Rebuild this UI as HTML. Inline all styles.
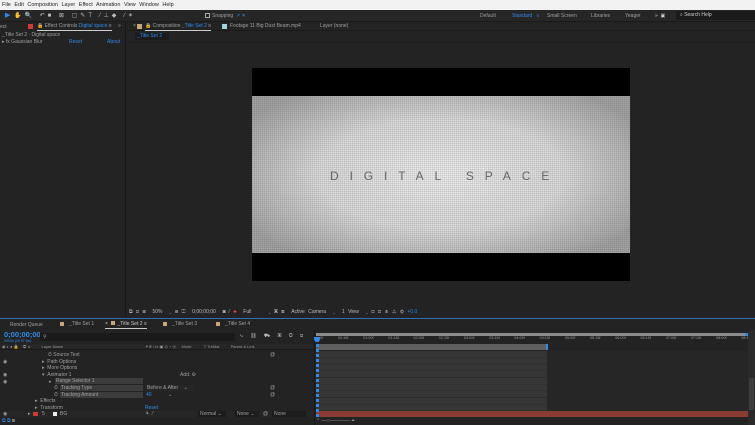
<!DOCTYPE html>
<html><head><meta charset="utf-8"><style>
*{margin:0;padding:0;box-sizing:border-box}
body{width:755px;height:425px;overflow:hidden;background:#232323;font-family:"Liberation Sans",sans-serif;font-size:5px;color:#a0a0a0;position:relative}
.a{position:absolute;white-space:nowrap}
.blue{color:#2d8ceb}
</style></head><body>
<!-- menu -->
<div class="a" style="left:0;top:0;width:755px;height:10px;background:#f2f2f2;color:#222;font-size:5.5px;line-height:10px;padding-left:2px;word-spacing:2px">File Edit Composition Layer Effect Animation View Window Help</div>
<!-- toolbar -->
<div class="a" style="left:0;top:10px;width:755px;height:12px;background:#262626;border-bottom:1px solid #1a1a1a"></div>
<div class="a" style="left:5px;top:13px;color:#2d8ceb;font-size:7px;line-height:6px">▶</div>
<div class="a" style="left:14px;top:12px;color:#bbb;font-size:6px;letter-spacing:3px;line-height:8px">✋🔍 ↶■ ⊠ ▢✎T ⁄⊥◆ ⁄✶</div>
<div class="a" style="left:205px;top:13px;width:5px;height:5px;border:1px solid #aaa"></div>
<div class="a" style="left:212px;top:12px;line-height:8px">Snapping &nbsp;<span class="blue">↗ ✕</span></div>
<div class="a" style="left:480px;top:12px;line-height:8px;color:#999">Default</div>
<div class="a" style="left:512px;top:12px;line-height:8px" ><span class="blue">Standard &nbsp; ≡</span></div>
<div class="a" style="left:547px;top:12px;line-height:8px">Small Screen</div>
<div class="a" style="left:591px;top:12px;line-height:8px">Libraries</div>
<div class="a" style="left:625px;top:12px;line-height:8px">Yeager</div>
<div class="a" style="left:655px;top:12px;line-height:8px;color:#ccc">» &nbsp;▣</div>
<div class="a" style="left:676px;top:11px;width:79px;height:9px;background:#1b1b1b;line-height:9px;padding-left:4px;color:#ccc">⌕ Search Help</div>
<!-- left panel -->
<div class="a" style="left:0;top:22px;width:126px;height:296px;background:#232323;border-right:1px solid #181818"></div>
<div class="a" style="left:0;top:24px;line-height:6px">ect</div>
<div class="a" style="left:28px;top:24px;width:5px;height:5px;background:#d03a32"></div>
<div class="a" style="left:37px;top:23px;line-height:7px;border-bottom:1px solid #ccc">🔒 Effect Controls <span class="blue">Digital space</span> ≡</div>
<div class="a" style="left:118px;top:23px;line-height:7px">»</div>
<div class="a" style="left:2px;top:32px;line-height:6px">_Title Set 2 · Digital space</div>
<div class="a" style="left:2px;top:39px;line-height:6px">▸ fx Gaussian Blur</div>
<div class="a blue" style="left:69px;top:39px;line-height:6px">Reset</div>
<div class="a blue" style="left:107px;top:39px;line-height:6px">About</div>
<!-- comp panel tabs -->
<div class="a" style="left:127px;top:22px;width:628px;height:9px;background:#232323;border-bottom:1px solid #1a1a1a"></div>
<div class="a" style="left:133px;top:23px;line-height:7px">×</div>
<div class="a" style="left:137px;top:24px;width:5px;height:5px;background:#c8a878"></div>
<div class="a" style="left:145px;top:23px;line-height:7px;border-bottom:1px solid #ccc">🔒 Composition <span class="blue">_Title Set 2</span> ≡</div>
<div class="a" style="left:222px;top:24px;width:5px;height:5px;background:#9fd4d8"></div>
<div class="a" style="left:230px;top:23px;line-height:7px">Footage 11 Big Dust Beam.mp4</div>
<div class="a" style="left:320px;top:23px;line-height:7px">Layer (none)</div>
<div class="a blue" style="left:135px;top:33px;width:34px;height:7px;background:#1b1b1b;line-height:7px;padding-left:2px">_Title Set 2</div>
<div class="a" style="left:127px;top:42px;width:628px;height:1px;background:#1d1d1d"></div>
<!-- viewer -->
<div class="a" style="left:252px;top:68px;width:378px;height:213px;background:#000"></div>
<div class="a" style="left:252px;top:96px;width:378px;height:157px;background:radial-gradient(ellipse 60% 65% at 50% 50%,#ececec 0%,#dadada 55%,#a4a4a4 100%)"></div>
<div class="a" style="left:252px;top:96px;width:378px;height:157px;background-image:linear-gradient(90deg,rgba(0,0,0,.07) 1px,transparent 1px),linear-gradient(0deg,rgba(0,0,0,.07) 1px,transparent 1px);background-size:2px 2px"></div>
<div class="a" style="left:330px;top:169px;font-size:12px;line-height:14px;letter-spacing:10.9px;color:#666">DIGITAL SPACE</div>
<!-- viewer bottom bar -->
<div class="a" style="left:127px;top:308px;width:628px;height:10px;background:#232323;overflow:hidden"></div>
<div class="a" style="left:129px;top:309px;line-height:7px;color:#bbb;word-spacing:2px">⧉ ⊡ ⊞ &nbsp;50% &nbsp;⌄ ⊟ ◫ &nbsp;0;00;00;00 &nbsp;◙ ⁄ <span style="color:#d44">♣</span> &nbsp;Full &nbsp;&nbsp;&nbsp;&nbsp;⌄ ▣ ⊠ &nbsp;Active Camera &nbsp;⌄ &nbsp;1 View &nbsp;⌄ ⊡ ⊡ ⏏ ⁂ ⚙ <span class="blue">+0.0</span></div>
<div class="a" style="left:0;top:318px;width:755px;height:1px;background:#2a6fb8"></div>
<!-- timeline tabs -->
<div class="a" style="left:0;top:319px;width:755px;height:11px;background:#232323"></div>
<div class="a" style="left:10px;top:322px;line-height:6px">Render Queue</div>
<div class="a" style="left:60px;top:322px;width:4px;height:4px;background:#c8a878"></div>
<div class="a" style="left:69px;top:321px;line-height:6px">_Title Set 1</div>
<div class="a" style="left:105px;top:321px;line-height:7px;border-bottom:1px solid #ccc;color:#ccc">× &nbsp;<span style="display:inline-block;width:4px;height:4px;background:#c8a878"></span> &nbsp;_Title Set 2 ≡</div>
<div class="a" style="left:163px;top:322px;width:4px;height:4px;background:#c8a878"></div>
<div class="a" style="left:172px;top:321px;line-height:6px">_Title Set 3</div>
<div class="a" style="left:216px;top:322px;width:4px;height:4px;background:#c8a878"></div>
<div class="a" style="left:225px;top:321px;line-height:6px">_Title Set 4</div>
<!-- timeline left -->
<div class="a" style="left:0;top:330px;width:315px;height:95px;background:#232323"></div>
<div class="a blue" style="left:4px;top:331px;font-size:7.5px;line-height:8px;font-weight:bold">0;00;00;00</div>
<div class="a blue" style="left:4px;top:339px;font-size:3.5px;line-height:4px">00000 (29.97 fps)</div>
<div class="a" style="left:40px;top:333px;width:195px;height:8px;background:#1a1a1a;line-height:8px;padding-left:3px">⚲</div>
<div class="a" style="left:240px;top:333px;line-height:7px;color:#bbb;word-spacing:6px">⤷ ⛓ ⛟ ▣ ◎ ⊡</div>
<div class="a" style="left:0;top:344px;width:315px;height:6px;background:#262626;border-bottom:1px solid #1a1a1a"></div>
<div class="a" style="left:2px;top:344px;font-size:4px;line-height:6px;color:#999">◉ ◐ ● 🔒 &nbsp;&nbsp; ⧉ &nbsp;# &nbsp;&nbsp;&nbsp;&nbsp;&nbsp;&nbsp;&nbsp;&nbsp;&nbsp;Layer Name</div>
<div class="a" style="left:145px;top:344px;font-size:4px;line-height:6px;color:#999">⚘✲ \ fx ▣ ◎ ◔ ◎ &nbsp;&nbsp;&nbsp;&nbsp;Mode &nbsp;&nbsp;&nbsp;&nbsp;&nbsp;&nbsp;&nbsp;&nbsp;&nbsp;&nbsp;T TrkMat &nbsp;&nbsp;&nbsp;&nbsp;&nbsp;&nbsp;&nbsp;&nbsp;&nbsp;Parent &amp; Link</div>
<div class="a" style="left:48px;top:352px;line-height:6px">⏱ Source Text</div>
<div class="a" style="left:270px;top:352px;line-height:6px">@</div>
<div class="a" style="left:3px;top:359px;line-height:6px">◉</div>
<div class="a" style="left:42px;top:359px;line-height:6px">▸ &nbsp;Path Options</div>
<div class="a" style="left:42px;top:365px;line-height:6px">▸ &nbsp;More Options</div>
<div class="a" style="left:3px;top:372px;line-height:6px">◉</div>
<div class="a" style="left:42px;top:372px;line-height:6px">▾ &nbsp;Animator 1</div>
<div class="a" style="left:180px;top:372px;line-height:6px">Add: ⚙</div>
<div class="a" style="left:3px;top:379px;line-height:6px">◉</div>
<div class="a" style="left:49px;top:379px;line-height:6px">▸</div>
<div class="a" style="left:55px;top:378px;width:88px;height:6px;background:#3c3c3c;line-height:6px;padding-left:1px">Range Selector 1</div>
<div class="a" style="left:54px;top:385px;line-height:6px">⏱</div>
<div class="a" style="left:60px;top:385px;width:83px;height:6px;background:#3c3c3c;line-height:6px;padding-left:1px">Tracking Type</div>
<div class="a" style="left:146px;top:385px;width:48px;height:6px;background:#262626;line-height:6px;padding-left:1px">Before &amp; After &nbsp;&nbsp;&nbsp;⌄</div>
<div class="a" style="left:270px;top:385px;line-height:6px">@</div>
<div class="a" style="left:54px;top:392px;line-height:6px">⏱</div>
<div class="a" style="left:60px;top:392px;width:83px;height:6px;background:#3c3c3c;line-height:6px;padding-left:1px">Tracking Amount</div>
<div class="a blue" style="left:146px;top:392px;line-height:6px">40</div>
<div class="a" style="left:168px;top:392px;line-height:6px">⌄</div>
<div class="a" style="left:270px;top:392px;line-height:6px">@</div>
<div class="a" style="left:35px;top:398px;line-height:6px">▸ &nbsp;Effects</div>
<div class="a" style="left:35px;top:405px;line-height:6px">▸ &nbsp;Transform</div>
<div class="a blue" style="left:145px;top:405px;line-height:6px">Reset</div>
<div class="a" style="left:0;top:411px;width:315px;height:6px;background:#262626"></div>
<div class="a" style="left:3px;top:411px;line-height:6px">◉</div>
<div class="a" style="left:28px;top:411px;line-height:6px">▸</div>
<div class="a" style="left:33px;top:412px;width:5px;height:4px;background:#d03a32"></div>
<div class="a" style="left:42px;top:411px;line-height:6px">5</div>
<div class="a" style="left:53px;top:412px;width:4px;height:4px;background:#eee"></div>
<div class="a" style="left:60px;top:411px;line-height:6px">BG</div>
<div class="a" style="left:145px;top:411px;line-height:6px">⚘ &nbsp;⁄</div>
<div class="a" style="left:198px;top:411px;width:28px;height:6px;background:#1c1c1c;line-height:6px;padding-left:2px">Normal ⌄</div>
<div class="a" style="left:235px;top:411px;width:24px;height:6px;background:#1c1c1c;line-height:6px;padding-left:2px">None ⌄</div>
<div class="a" style="left:263px;top:411px;line-height:6px">@</div>
<div class="a" style="left:272px;top:411px;width:34px;height:6px;background:#1c1c1c;line-height:6px;padding-left:2px">None</div>
<div class="a blue" style="left:2px;top:418px;line-height:6px">⧉ ⧉ <span style="color:#aaa">⊞</span></div>
<!-- timeline right -->
<div class="a" style="left:314px;top:330px;width:1px;height:95px;background:#181818"></div>
<div class="a" style="left:316px;top:333px;width:432px;height:3px;background:#8a8a8a"></div>
<div class="a" style="left:745px;top:333px;width:3px;height:3px;background:#2d8ceb"></div>
<div class="a" style="left:316px;top:336px;width:432px;height:8px;overflow:hidden;background:#232323;font-size:3.8px;color:#999;line-height:5px;word-spacing:13.6px;padding-left:4px">0f 00:15f 01:00f 01:15f 02:00f 02:15f 03:00f 03:15f 04:00f 04:15f 05:00f 05:15f 06:00f 06:15f 07:00f 07:15f 08:00f 08:15f 09:00f 09:15f</div>
<div class="a" style="left:316px;top:344px;width:231px;height:6px;background:#5f5f5f"></div>
<div class="a" style="left:546px;top:344px;width:2px;height:6px;background:#2d8ceb"></div>
<div class="a" style="left:316px;top:351px;width:432px;height:60px;background:#262626"></div>
<div class="a" style="left:316px;top:351px;width:231px;height:60px;background:repeating-linear-gradient(180deg,#363636 0,#363636 6px,#2c2c2c 6px,#2c2c2c 6.7px)"></div>
<div class="a" style="left:316px;top:411px;width:432px;height:6px;background:#8a3b33"></div>
<div class="a" style="left:316px;top:339px;width:3px;height:78px;background:repeating-linear-gradient(180deg,#2d8ceb 0,#2d8ceb 3px,transparent 3px,transparent 5px)"></div>
<div class="a" style="left:314px;top:337px;width:6px;height:5px;background:#2d8ceb;border-radius:0 0 3px 3px"></div>
<div class="a" style="left:748px;top:330px;width:7px;height:95px;background:#2a2a2a"></div>
<div class="a" style="left:749px;top:378px;width:5px;height:32px;background:#3d3d3d"></div>
<div class="a" style="left:316px;top:418px;line-height:6px;color:#999">⌃ —○———— ⏶</div>
</body></html>
